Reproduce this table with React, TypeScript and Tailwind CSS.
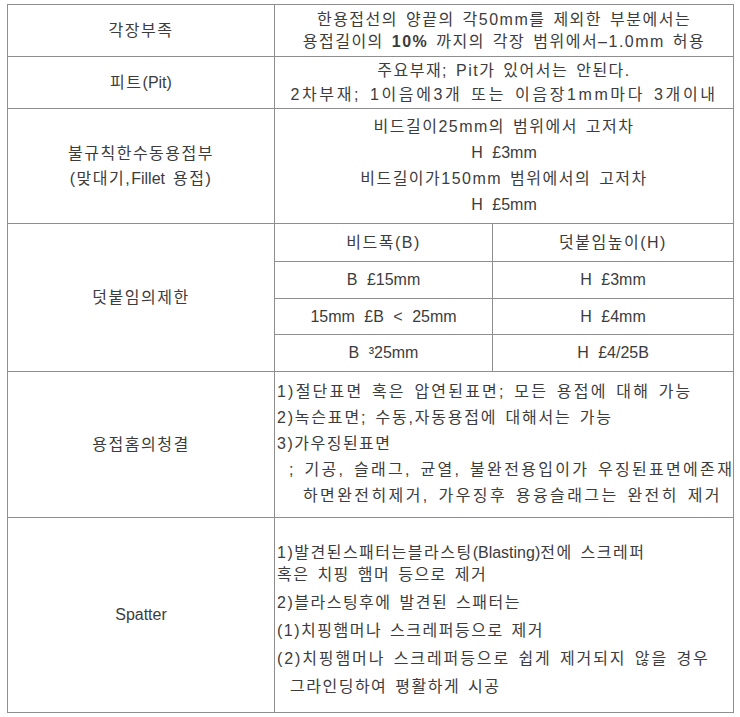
const cell = "border border-[#8e8e8e] p-0 align-middle"

export default function App() {
  return (
    <div className="min-h-screen bg-white pt-[4px] pl-[7px] font-['Liberation_Sans','Noto_Sans_CJK_KR',sans-serif] text-[16px] text-[#3c3c3c] tracking-[1.5px] [word-spacing:2px]">
      <table className="w-[726px] table-fixed border-collapse">
        <colgroup>
          <col className="w-[267px]" />
          <col className="w-[218px]" />
          <col className="w-[241px]" />
        </colgroup>
        <tbody>
          {/* 각장부족 */}
          <tr>
            <td className={`${cell} h-[52px] text-center`}>각장부족</td>
            <td colSpan={2} className={`${cell} text-center leading-[22px]`}>
              <div>한용접선의 양끝의 각50mm를 제외한 부분에서는</div>
              <div>
                용접길이의 <b className="font-bold">10%</b> 까지의 각장 범위에서–1.0mm 허용
              </div>
            </td>
          </tr>

          {/* 피트 */}
          <tr>
            <td className={`${cell} h-[52px] text-center`}>
              피트<span className="tracking-normal">(Pit)</span>
            </td>
            <td colSpan={2} className={`${cell} text-center leading-[24px]`}>
              <div>주요부재; Pit가 있어서는 안된다.</div>
              <div className="tracking-[2.6px]">2차부재; 1이음에3개 또는 이음장1mm마다 3개이내</div>
            </td>
          </tr>

          {/* 불규칙한수동용접부 */}
          <tr>
            <td className={`${cell} h-[115px] text-center leading-[25px]`}>
              <div>불규칙한수동용접부</div>
              <div>(맞대기,<span className="tracking-normal">Fillet</span> 용접)</div>
            </td>
            <td colSpan={2} className={`${cell} text-center leading-[26px]`}>
              <div>비드길이25mm의 범위에서 고저차</div>
              <div className="tracking-normal [word-spacing:5px]">H £3mm</div>
              <div>비드길이가150mm 범위에서의 고저차</div>
              <div className="tracking-normal [word-spacing:5px]">H £5mm</div>
            </td>
          </tr>

          {/* 덧붙임의제한 */}
          <tr>
            <td rowSpan={4} className={`${cell} text-center`}>덧붙임의제한</td>
            <td className={`${cell} h-[38px] text-center`}>비드폭(B)</td>
            <td className={`${cell} text-center`}>덧붙임높이(H)</td>
          </tr>
          <tr>
            <td className={`${cell} h-[37px] text-center tracking-normal [word-spacing:5px]`}>B £15mm</td>
            <td className={`${cell} text-center tracking-normal [word-spacing:5px]`}>H £3mm</td>
          </tr>
          <tr>
            <td className={`${cell} h-[36px] text-center tracking-normal [word-spacing:5px]`}>15mm £B &lt; 25mm</td>
            <td className={`${cell} text-center tracking-normal [word-spacing:5px]`}>H £4mm</td>
          </tr>
          <tr>
            <td className={`${cell} h-[37px] text-center tracking-normal [word-spacing:5px]`}>B ³25mm</td>
            <td className={`${cell} text-center tracking-normal [word-spacing:5px]`}>H £4/25B</td>
          </tr>

          {/* 용접홈의청결 */}
          <tr>
            <td className={`${cell} h-[146px] text-center`}>용접홈의청결</td>
            <td colSpan={2} className={`${cell} align-top pt-[7px] pl-[2px] leading-[26px] whitespace-nowrap`}>
              <div className="tracking-[2.2px]">1)절단표면 혹은 압연된표면; 모든 용접에 대해 가능</div>
              <div className="tracking-[1.8px]">2)녹슨표면; 수동,자동용접에 대해서는 가능</div>
              <div>3)가우징된표면</div>
              <div className="pl-[12px] tracking-[2.3px]">; 기공, 슬래그, 균열, 불완전용입이가 우징된표면에존재</div>
              <div className="pl-[26px] tracking-[2.4px]">하면완전히제거, 가우징후 용융슬래그는 완전히 제거</div>
            </td>
          </tr>

          {/* Spatter */}
          <tr>
            <td className={`${cell} h-[195px] text-center tracking-normal`}>Spatter</td>
            <td colSpan={2} className={`${cell} align-top pt-[24px] pl-[2px] whitespace-nowrap`}>
              <div className="leading-[22px]">
                <div>
                  1)발견된스패터는블라스팅<span className="tracking-normal">(Blasting)</span>전에 스크레퍼
                </div>
                <div>혹은 치핑 햄머 등으로 제거</div>
              </div>
              <div className="mt-[3px] leading-[28px]">
                <div>2)블라스팅후에 발견된 스패터는</div>
                <div>(1)치핑햄머나 스크레퍼등으로 제거</div>
                <div className="tracking-[1.9px]">(2)치핑햄머나 스크레퍼등으로 쉽게 제거되지 않을 경우</div>
                <div className="pl-[13px]">그라인딩하여 평활하게 시공</div>
              </div>
            </td>
          </tr>
        </tbody>
      </table>
    </div>
  )
}
